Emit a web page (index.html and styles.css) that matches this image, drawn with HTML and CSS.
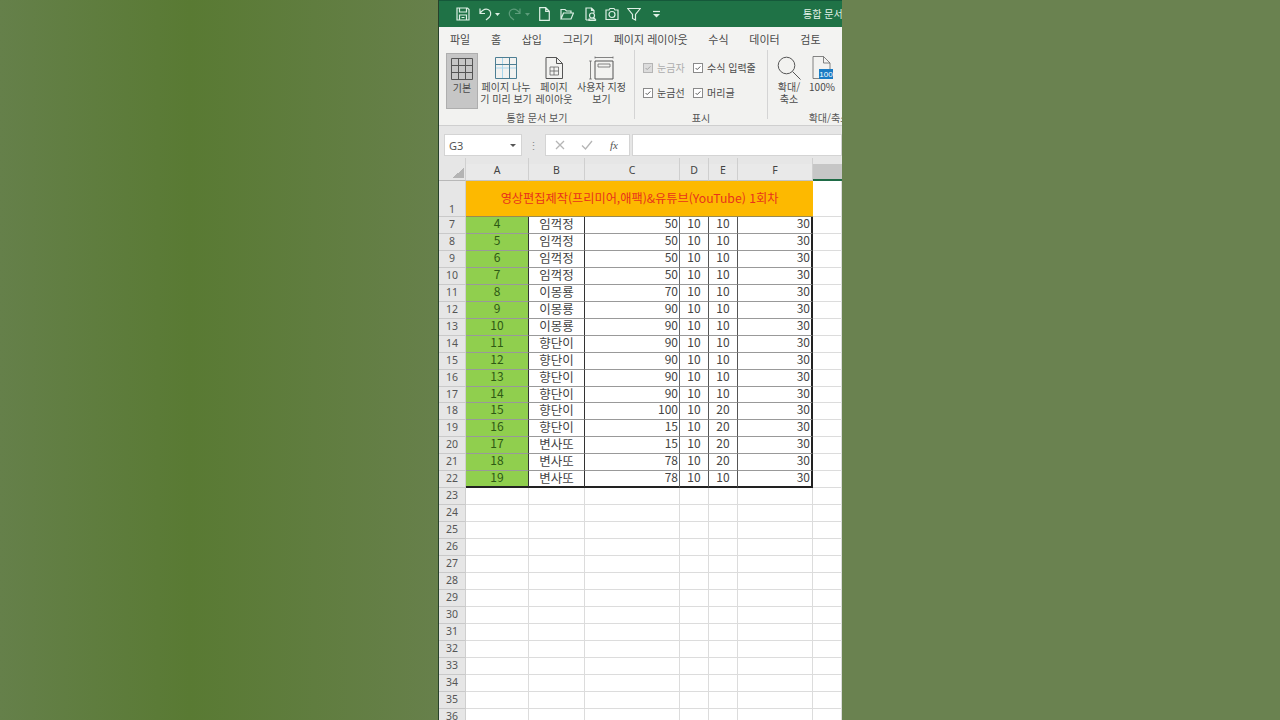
FILE: index.html
```html
<!DOCTYPE html>
<html lang="ko">
<head>
<meta charset="utf-8">
<title>통합 문서1 - Excel</title>
<link rel="stylesheet" href="styles.css">
</head>
<body>
<main class="phone">
  <header class="titlebar">
    <svg class="qa" width="14" height="14" viewBox="0 0 14 14"><path d="M1 1h10.500L13 2.500V13H1z M3.500 1v4h7V1 M3.500 13V8h7v5 M5.500 10.500h3"/></svg>
    <svg class="qa" width="14" height="14" viewBox="0 0 14 14"><path d="M2 1.500v5h5 M2 6.500C4 3.500 7 1.500 10 2.500c3 1 3.500 5 1.500 7.500L8 13"/></svg>
    <svg class="qa caret" width="5" height="14" viewBox="0 0 5 14"><path class="fill" d="M0 6h5L2.500 9z"/></svg>
    <svg class="qa dim" width="14" height="14" viewBox="0 0 14 14"><path d="M12 1.500v5H7 M12 6.500C10 3.500 7 1.500 4 2.500 1 3.500.5 7.500 2.500 10L6 13"/></svg>
    <svg class="qa caret dim" width="5" height="14" viewBox="0 0 5 14"><path class="fill" d="M0 6h5L2.500 9z"/></svg>
    <svg class="qa nudge" width="11" height="14" viewBox="0 0 11 14"><path d="M.7.700h6l3.600 3.600v9H.7z M6.700.700v3.600h3.600"/></svg>
    <svg class="qa wide" width="14" height="14" viewBox="0 0 14 14"><path d="M1 12V2.500h4l1.500 1.500h4.500v2 M1 12l2.500-6H13.500L11 12z"/></svg>
    <svg class="qa wider" width="12" height="14" viewBox="0 0 12 14"><path d="M1 13V1h5.500L9 3.500V6 M6.500 1v2.500H9 M1 13h4"/><circle cx="7" cy="8.500" r="2.500"/><path d="M8.500 10.500 11 13.500 M4 12h6v1.500H4z"/></svg>
    <svg class="qa" width="14" height="14" viewBox="0 0 14 14"><path d="M1 3h3l1-1.500h4L10 3h3v9.500H1z"/><circle cx="7" cy="7.500" r="3"/></svg>
    <svg class="qa" width="14" height="14" viewBox="0 0 14 14"><path d="M.7 1.500h12.600L8.500 7.500V13l-3-1.500v-4z"/></svg>
    <svg class="qa more" width="7" height="14" viewBox="0 0 7 14"><path d="M0 4.500h7"/><path class="fill" d="M0 7h7L3.500 10.500z"/></svg>
    <span class="doc-title">통합 문서1 - Excel</span>
  </header>

  <nav class="tabs">
    <span>파일</span><span>홈</span><span>삽입</span><span>그리기</span><span>페이지 레이아웃</span><span>수식</span><span>데이터</span><span>검토</span>
  </nav>

  <section class="ribbon">
    <div class="group group-views">
      <div class="group-body">
        <div class="btn btn-active w-basic">
          <svg width="24" height="24" viewBox="0 0 24 24"><path class="ink" d="M1.500 1.500h21v21h-21z M1.500 8.500h21 M1.500 15.500h21 M8.500 1.500v21 M15.500 1.500v21"/></svg>
          <span>기본</span>
        </div>
        <div class="btn w-break">
          <svg width="24" height="24" viewBox="0 0 24 24"><path class="pale" d="M1.500 12h21 M8.500 1.500v21"/><path class="teal" d="M1.500 1.500h21v21h-21z M1.500 8.500h21 M15.500 1.500v21"/></svg>
          <span>페이지 나누<br>기 미리 보기</span>
        </div>
        <div class="btn w-layout">
          <svg width="24" height="24" viewBox="0 0 24 24"><path class="ink" d="M4 1.500h10.500L20.500 7.500v15H4z M14.500 1.500v6h6"/><path class="ink thin" d="M8 11h8.500v8H8z M8 15h8.500 M12 11v8"/></svg>
          <span>페이지<br>레이아웃</span>
        </div>
        <div class="btn w-custom">
          <svg width="26" height="24" viewBox="0 0 26 24"><path class="ink thin" d="M6 1.500h18 M6 .5v2 M24 .5v2 M1.500 5v18 M.2 5h2.600 M.2 23h2.600"/><path class="ink" d="M6 5h18v18H6z"/><path class="ink thin" d="M9 8h12v3H9z"/></svg>
          <span>사용자 지정<br>보기</span>
        </div>
      </div>
      <div class="group-label label-views">통합 문서 보기</div>
    </div>

    <div class="group group-show">
      <div class="checks">
        <label class="check check-off"><svg width="10" height="10" viewBox="0 0 10 10"><path d="M2 5l2 2 4-4"/></svg>눈금자</label>
        <label class="check"><svg width="10" height="10" viewBox="0 0 10 10"><path d="M2 5l2 2 4-4"/></svg>수식 입력줄</label>
        <label class="check"><svg width="10" height="10" viewBox="0 0 10 10"><path d="M2 5l2 2 4-4"/></svg>눈금선</label>
        <label class="check"><svg width="10" height="10" viewBox="0 0 10 10"><path d="M2 5l2 2 4-4"/></svg>머리글</label>
      </div>
      <div class="group-label">표시</div>
    </div>

    <div class="group group-zoom">
      <div class="group-body">
        <div class="btn w-zoom">
          <svg width="24" height="24" viewBox="0 0 24 24"><circle class="ink" cx="9.500" cy="9.500" r="8.300"/><path class="ink" d="M15.500 15.500 23.500 23.500"/></svg>
          <span>확대/<br>축소</span>
        </div>
        <div class="btn w-hundred">
          <svg width="22" height="24" viewBox="0 0 22 24"><path class="ink thin" d="M2 .5h10.500L19 7v7 M12.500.5V7H19 M2 .5v22h6"/><rect class="badge" x="8" y="13" width="14" height="10"/><text class="badge-text" x="15" y="21.200">100</text></svg>
          <span>100%</span>
        </div>
        <div class="btn w-fit">
          <svg width="24" height="24" viewBox="0 0 24 24"><path class="ink thin" d="M2 2h20v20H2z"/></svg>
          <span>선택 영역<br>확대/축소</span>
        </div>
      </div>
      <div class="group-label">확대/축소</div>
    </div>
  </section>

  <section class="formula-bar">
    <div class="name-box"><span>G3</span><svg width="6" height="3" viewBox="0 0 6 3"><path d="M0 0h6L3 3z"/></svg></div>
    <div class="grip">⋮</div>
    <div class="fx-buttons">
      <svg width="10" height="10" viewBox="0 0 10 10"><path d="M1 1l8 8M9 1l-8 8"/></svg>
      <svg width="12" height="10" viewBox="0 0 12 10"><path d="M1 5.500 4.500 9 11 1"/></svg>
      <i class="fx">fx</i>
    </div>
    <div class="formula-input"></div>
  </section>

  <section class="sheet">
    <div class="corner"><b class="corner-mark"></b></div><div class="ch">A</div><div class="ch">B</div><div class="ch">C</div><div class="ch">D</div><div class="ch">E</div><div class="ch">F</div><div class="ch ch-selected"></div>

    <div class="rh rh-title">1</div><div class="title-cell">영상편집제작(프리미어,애팩)&amp;유튜브(YouTube) 1회차</div><div class="e"></div>

    <div class="rh">7</div><div class="a">4</div><div class="b">임꺽정</div><div class="n">50</div><div class="m">10</div><div class="m">10</div><div class="f">30</div><div class="e"></div>
    <div class="rh">8</div><div class="a">5</div><div class="b">임꺽정</div><div class="n">50</div><div class="m">10</div><div class="m">10</div><div class="f">30</div><div class="e"></div>
    <div class="rh">9</div><div class="a">6</div><div class="b">임꺽정</div><div class="n">50</div><div class="m">10</div><div class="m">10</div><div class="f">30</div><div class="e"></div>
    <div class="rh">10</div><div class="a">7</div><div class="b">임꺽정</div><div class="n">50</div><div class="m">10</div><div class="m">10</div><div class="f">30</div><div class="e"></div>
    <div class="rh">11</div><div class="a">8</div><div class="b">이몽룡</div><div class="n">70</div><div class="m">10</div><div class="m">10</div><div class="f">30</div><div class="e"></div>
    <div class="rh">12</div><div class="a">9</div><div class="b">이몽룡</div><div class="n">90</div><div class="m">10</div><div class="m">10</div><div class="f">30</div><div class="e"></div>
    <div class="rh">13</div><div class="a">10</div><div class="b">이몽룡</div><div class="n">90</div><div class="m">10</div><div class="m">10</div><div class="f">30</div><div class="e"></div>
    <div class="rh">14</div><div class="a">11</div><div class="b">향단이</div><div class="n">90</div><div class="m">10</div><div class="m">10</div><div class="f">30</div><div class="e"></div>
    <div class="rh">15</div><div class="a">12</div><div class="b">향단이</div><div class="n">90</div><div class="m">10</div><div class="m">10</div><div class="f">30</div><div class="e"></div>
    <div class="rh">16</div><div class="a">13</div><div class="b">향단이</div><div class="n">90</div><div class="m">10</div><div class="m">10</div><div class="f">30</div><div class="e"></div>
    <div class="rh">17</div><div class="a">14</div><div class="b">향단이</div><div class="n">90</div><div class="m">10</div><div class="m">10</div><div class="f">30</div><div class="e"></div>
    <div class="rh">18</div><div class="a">15</div><div class="b">향단이</div><div class="n">100</div><div class="m">10</div><div class="m">20</div><div class="f">30</div><div class="e"></div>
    <div class="rh">19</div><div class="a">16</div><div class="b">향단이</div><div class="n">15</div><div class="m">10</div><div class="m">20</div><div class="f">30</div><div class="e"></div>
    <div class="rh">20</div><div class="a">17</div><div class="b">변사또</div><div class="n">15</div><div class="m">10</div><div class="m">20</div><div class="f">30</div><div class="e"></div>
    <div class="rh">21</div><div class="a">18</div><div class="b">변사또</div><div class="n">78</div><div class="m">10</div><div class="m">20</div><div class="f">30</div><div class="e"></div>
    <div class="rh">22</div><div class="a last">19</div><div class="b last">변사또</div><div class="n last">78</div><div class="m last">10</div><div class="m last">10</div><div class="f last">30</div><div class="e"></div>

    <div class="rh">23</div><div class="e"></div><div class="e"></div><div class="e"></div><div class="e"></div><div class="e"></div><div class="e"></div><div class="e"></div>
    <div class="rh">24</div><div class="e"></div><div class="e"></div><div class="e"></div><div class="e"></div><div class="e"></div><div class="e"></div><div class="e"></div>
    <div class="rh">25</div><div class="e"></div><div class="e"></div><div class="e"></div><div class="e"></div><div class="e"></div><div class="e"></div><div class="e"></div>
    <div class="rh">26</div><div class="e"></div><div class="e"></div><div class="e"></div><div class="e"></div><div class="e"></div><div class="e"></div><div class="e"></div>
    <div class="rh">27</div><div class="e"></div><div class="e"></div><div class="e"></div><div class="e"></div><div class="e"></div><div class="e"></div><div class="e"></div>
    <div class="rh">28</div><div class="e"></div><div class="e"></div><div class="e"></div><div class="e"></div><div class="e"></div><div class="e"></div><div class="e"></div>
    <div class="rh">29</div><div class="e"></div><div class="e"></div><div class="e"></div><div class="e"></div><div class="e"></div><div class="e"></div><div class="e"></div>
    <div class="rh">30</div><div class="e"></div><div class="e"></div><div class="e"></div><div class="e"></div><div class="e"></div><div class="e"></div><div class="e"></div>
    <div class="rh">31</div><div class="e"></div><div class="e"></div><div class="e"></div><div class="e"></div><div class="e"></div><div class="e"></div><div class="e"></div>
    <div class="rh">32</div><div class="e"></div><div class="e"></div><div class="e"></div><div class="e"></div><div class="e"></div><div class="e"></div><div class="e"></div>
    <div class="rh">33</div><div class="e"></div><div class="e"></div><div class="e"></div><div class="e"></div><div class="e"></div><div class="e"></div><div class="e"></div>
    <div class="rh">34</div><div class="e"></div><div class="e"></div><div class="e"></div><div class="e"></div><div class="e"></div><div class="e"></div><div class="e"></div>
    <div class="rh">35</div><div class="e"></div><div class="e"></div><div class="e"></div><div class="e"></div><div class="e"></div><div class="e"></div><div class="e"></div>
    <div class="rh">36</div><div class="e"></div><div class="e"></div><div class="e"></div><div class="e"></div><div class="e"></div><div class="e"></div><div class="e"></div>
  </section>
</main>
</body>
</html>
```
FILE: styles.css
```css
* { box-sizing: border-box; }
html, body { margin: 0; height: 720px; overflow: hidden; }
body {
  display: flex;
  justify-content: center;
  background: linear-gradient(90deg, #65804a 0, #597a33 190px, #67804b 438px, #6a8250 842px, #6a8250 1280px);
  font-family: "Noto Sans CJK KR", "Noto Sans", sans-serif;
  color: #444;
}
.phone {
  width: 404px;
  height: 720px;
  border-left: 1px solid #27402a;
  background: #e6e6e6;
  overflow: hidden;
  display: flex;
  flex-direction: column;
}

/* title bar */
.titlebar {
  flex: none;
  height: 27px;
  display: flex;
  align-items: center;
  gap: 8px;
  padding-left: 17px;
  background: #1f7246;
  border-top: 1px solid #15583a;
}
.qa { flex: none; fill: none; stroke: #dcefe4; stroke-width: 1.2; }
.qa .fill { fill: #dcefe4; stroke: none; }
.qa.dim { stroke: #5c9c7a; }
.qa.dim .fill { fill: #5c9c7a; }
.qa.caret { margin-left: -5px; }
.qa.nudge { margin-left: 1px; }
.qa.wide { margin-left: 2px; }
.qa.wider { margin-left: 3px; }
.qa.more { margin-left: 4px; }
.doc-title {
  flex: none;
  margin-left: 135px;
  font-size: 10px;
  line-height: 14px;
  white-space: nowrap;
  color: #e6f2ea;
}

/* tabs */
.tabs {
  flex: none;
  height: 23px;
  display: flex;
  align-items: center;
  gap: 20.7px;
  padding-left: 11px;
  background: #f3f3f2;
  font-size: 11px;
  line-height: 16px;
  white-space: nowrap;
  color: #4a4a4a;
}

/* ribbon */
.ribbon {
  flex: none;
  height: 76px;
  display: flex;
  padding-left: 7px;
  background: #f2f2f0;
  border-bottom: 1px solid #cfcfcf;
}
.group {
  flex: none;
  display: flex;
  flex-direction: column;
  padding-top: 3px;
  border-right: 1px solid #d4d4d4;
  height: 69px;
}
.group-views { width: 189px; }
.group-show { width: 133px; }
.group-zoom { width: 122px; border-right: 0; }
.group-body { display: flex; height: 56px; flex: none; }
.group-label {
  margin-top: 2px;
  text-align: center;
  font-size: 10px;
  line-height: 14px;
  color: #555;
  white-space: nowrap;
}
.label-views { padding-right: 6px; }
.btn {
  flex: none;
  display: flex;
  flex-direction: column;
  align-items: center;
  padding-top: 3px;
  font-size: 10px;
  line-height: 12px;
  text-align: center;
  white-space: nowrap;
  color: #4a4a4a;
}
.btn svg { flex: none; margin-bottom: 1px; }
.btn-active { background: #c6c6c6; border: 1px solid #aeaeae; }
.w-basic { width: 32px; margin-right: 2px; }
.w-break { width: 52px; }
.w-layout { width: 44px; }
.w-custom { width: 51px; }
.w-zoom { width: 42px; }
.w-hundred { width: 24px; }
.w-fit { width: 50px; margin-left: 6px; }
.ink { fill: none; stroke: #555; stroke-width: 1; }
.ink.thin { stroke: #666; stroke-width: .8; }
.pale { fill: none; stroke: #a9d6ec; stroke-width: 1; }
.teal { fill: none; stroke: #4d7f94; stroke-width: 1; }
.badge { fill: #1b7cc4; }
.badge-text { fill: #fff; font-size: 8px; text-anchor: middle; font-family: "Liberation Sans", sans-serif; }

.checks {
  height: 56px;
  flex: none;
  display: grid;
  grid-template-columns: 50px auto;
  grid-auto-rows: 25px;
  align-content: start;
  padding: 2px 0 0 8px;
}
.check {
  display: flex;
  align-items: center;
  gap: 4px;
  font-size: 10px;
  line-height: 14px;
  white-space: nowrap;
  color: #4a4a4a;
}
.check svg { flex: none; background: #fff; border: 1px solid #8a8a8a; fill: none; stroke: #444; stroke-width: 1.1; }
.check-off { color: #adadad; }
.check-off svg { background: #dcdcdc; border-color: #b5b5b5; stroke: #9c9c9c; }

/* formula bar */
.formula-bar {
  flex: none;
  height: 32px;
  display: flex;
  align-items: flex-start;
  padding: 8px 0 0 5px;
  background: #e6e6e6;
}
.name-box {
  width: 78px;
  height: 22px;
  display: flex;
  align-items: center;
  justify-content: space-between;
  padding: 0 5px 0 4px;
  background: #fff;
  border: 1px solid #d4d4d4;
  font-size: 11px;
  color: #555;
  font-family: "Noto Sans", sans-serif;
}
.name-box svg { fill: #555; }
.grip { width: 23px; height: 22px; text-align: center; font-size: 11px; line-height: 22px; color: #8a8a8a; }
.fx-buttons {
  width: 85px;
  height: 22px;
  display: flex;
  align-items: center;
  gap: 16px;
  padding-left: 9px;
  background: #fff;
  border: 1px solid #d4d4d4;
}
.fx-buttons svg { flex: none; fill: none; stroke: #b5b5b5; stroke-width: 1.3; }
.fx { font-family: "Liberation Serif", serif; font-size: 11px; line-height: 14px; color: #555; margin-left: 1px; }
.formula-input {
  flex: 1;
  height: 22px;
  margin-left: 2px;
  background: #fff;
  border: 1px solid #d4d4d4;
}

/* sheet */
.sheet {
  flex: none;
  display: grid;
  grid-template-columns: 27px 63px 56px 95px 29px 29px 75px 29px;
  grid-template-rows: 23px 36px;
  grid-auto-rows: 16.96px;
  background: #fff;
  font-size: 12px;
}
.sheet > div { min-width: 0; }
.corner {
  display: flex;
  align-items: flex-end;
  justify-content: flex-end;
  padding: 0 1px 2px 0;
  background: #e6e6e6;
  border-right: 1px solid #d0d0d0;
  border-bottom: 1px solid #b8b8b8;
}
.corner-mark {
  width: 12px;
  height: 10px;
  background: linear-gradient(to bottom right, transparent 50%, #b4b4b4 50%);
}
.ch {
  padding-top: 4px;
  text-align: center;
  font-size: 10.5px;
  line-height: 16px;
  color: #444;
  background: linear-gradient(#e6e6e6 6px, #e9e9e9 6px);
  border-right: 1px solid #cfcfcf;
  border-bottom: 1px solid #c4c4c4;
  font-family: "Noto Sans", sans-serif;
}
.ch-selected {
  background: linear-gradient(#e6e6e6 6px, #c6c6c6 6px);
  border-right: 0;
  border-bottom: 2px solid #1f6b46;
}
.rh {
  text-align: center;
  font-size: 10.5px;
  line-height: 15px;
  color: #555;
  background: #e6e6e6;
  border-right: 1px solid #cfcfcf;
  border-bottom: 1px solid #c9c9c9;
  font-family: "Noto Sans", sans-serif;
}
.rh-title { padding-top: 21px; }
.title-cell {
  grid-column: span 6;
  display: flex;
  align-items: center;
  justify-content: center;
  background: #fdb900;
  color: #e8321c;
  font-size: 12.2px;
  line-height: 16px;
  white-space: nowrap;
  border-bottom: 1px solid #9a8a50;
  padding-bottom: 1px;
}
.a, .b, .n, .m, .f {
  line-height: 12px;
  border-bottom: 1px solid #999;
  white-space: nowrap;
  color: #444;
}
.a {
  text-align: center;
  background: #90cf4e;
  color: #2e5a14;
  border-right: 1px solid #333;
}
.b { text-align: center; line-height: 13px; border-right: 1px solid #333; font-size: 12.5px; }
.n { text-align: right; padding-right: 1px; border-right: 1px solid #666; }
.m { text-align: center; border-right: 1px solid #555; }
.f { text-align: right; padding-right: 1px; border-right: 2px solid #222; }
.last { border-bottom: 2px solid #222; }
.e { border-right: 1px solid #dcdcdc; border-bottom: 1px solid #dcdcdc; }
```
